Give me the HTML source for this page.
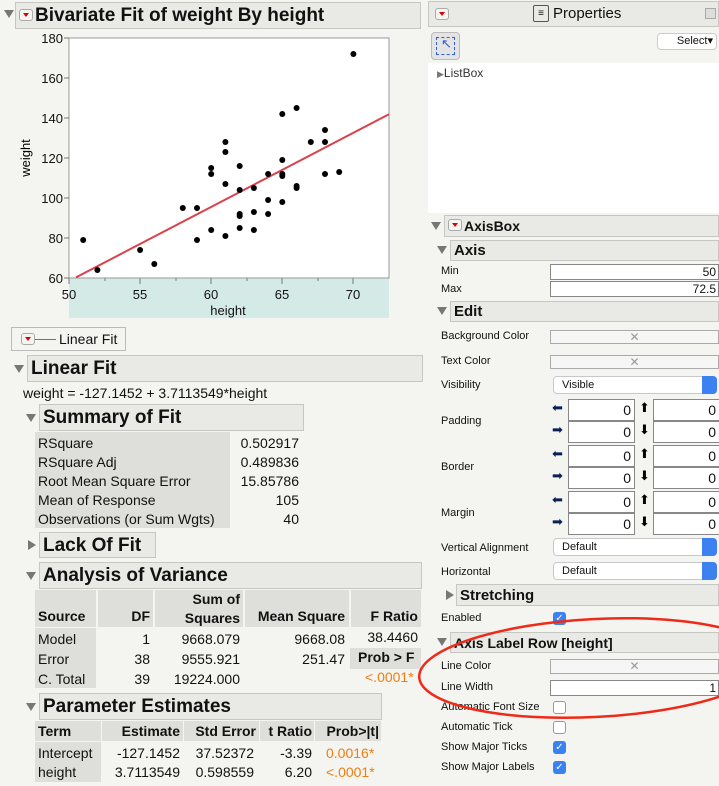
<!DOCTYPE html>
<html><head><meta charset="utf-8"><style>
*{margin:0;padding:0;box-sizing:border-box}
body{width:719px;height:786px;overflow:hidden;background:#f4f4f0;font-family:"Liberation Sans",sans-serif;color:#111;position:relative}
.a{position:absolute;white-space:nowrap}
.hb{position:absolute;background:#e9e9e5;border:1px solid #c6c6c2;font-weight:bold}
.tri{position:absolute;width:0;height:0;border-left:5px solid transparent;border-right:5px solid transparent;border-top:8px solid #777}
.trr{position:absolute;width:0;height:0;border-top:5px solid transparent;border-bottom:5px solid transparent;border-left:8px solid #777}
.rb{position:absolute;width:14px;height:12px;border:1px solid #aaa;border-radius:3px;background:#f4f4f0}
.rb:after{content:"";position:absolute;left:3px;top:3px;border-left:3px solid transparent;border-right:3px solid transparent;border-top:4px solid #d00}
.g{position:absolute;background:#dededa}
.t14{font-size:14px}
.r{text-align:right}
.lb{position:absolute;font-size:11px;left:441px}
.in{position:absolute;background:#fff;border:1px solid #888;font-size:12px;text-align:right;padding-right:2px;line-height:14px}
.cb{position:absolute;border:1px solid #aaa;background:#f6f6f6;text-align:center;color:#999;font-size:12px;line-height:13px}
.sel{position:absolute;background:#fff;border:1px solid #c8c8c8;border-radius:4px;font-size:11px;padding-left:8px;line-height:16px}
.sel:after{content:"";position:absolute;right:-1px;top:-1px;width:15px;height:18px;background:#3b82f0;border-radius:0 4px 4px 0}
.ck{position:absolute;width:13px;height:13px;border-radius:3px;background:#3b82f0;color:#fff;font-size:10px;line-height:13px;text-align:center}
.uc{position:absolute;width:13px;height:13px;border-radius:3px;background:#fff;border:1px solid #999}
.nb{position:absolute;background:#fff;border:1px solid #888;font-size:14px;text-align:right;padding-right:3px;line-height:20px}
.ar{position:absolute;font-size:13px;color:#0a1f55}
</style></head><body>

<!-- LEFT -->
<div class="tri" style="left:4px;top:10px"></div>
<div class="hb" style="left:15px;top:2px;width:406px;height:27px;font-size:19px;padding-left:19px;line-height:26px">Bivariate Fit of weight By height</div>
<div class="rb" style="left:19px;top:9px"></div>

<svg class="a" style="left:0;top:0" width="420" height="325">
<rect x="69" y="278" width="320" height="40" fill="#d4eae7"/>
<rect x="69" y="38" width="320" height="240" fill="#fff" stroke="#999" stroke-width="1"/>
<g stroke="#777" stroke-width="1">
<line x1="64" y1="38" x2="69" y2="38"/><line x1="64" y1="78" x2="69" y2="78"/><line x1="64" y1="118" x2="69" y2="118"/><line x1="64" y1="158" x2="69" y2="158"/><line x1="64" y1="198" x2="69" y2="198"/><line x1="64" y1="238" x2="69" y2="238"/><line x1="64" y1="278" x2="69" y2="278"/>
<line x1="69" y1="278" x2="69" y2="284"/><line x1="140" y1="278" x2="140" y2="284"/><line x1="211" y1="278" x2="211" y2="284"/><line x1="282" y1="278" x2="282" y2="284"/><line x1="353" y1="278" x2="353" y2="284"/>
<line x1="105" y1="278" x2="105" y2="281"/><line x1="176" y1="278" x2="176" y2="281"/><line x1="247" y1="278" x2="247" y2="281"/><line x1="318" y1="278" x2="318" y2="281"/>
</g>
<g font-size="13" fill="#111" text-anchor="end">
<text x="63" y="43">180</text><text x="63" y="83">160</text><text x="63" y="123">140</text><text x="63" y="163">120</text><text x="63" y="203">100</text><text x="63" y="243">80</text><text x="63" y="283">60</text></g>
<g font-size="13" fill="#111" text-anchor="middle">
<text x="69" y="299">50</text><text x="140" y="299">55</text><text x="211" y="299">60</text><text x="282" y="299">65</text><text x="353" y="299">70</text>
<text x="228" y="315">height</text></g>
<text x="30" y="158" font-size="13" text-anchor="middle" transform="rotate(-90 30 158)">weight</text>
<line x1="76" y1="277.4" x2="389" y2="114.2" stroke="#d9424c" stroke-width="2"/>
<g fill="#000">
<circle cx="83.2" cy="240" r="3"/><circle cx="97.4" cy="270" r="3"/><circle cx="140.1" cy="250" r="3"/><circle cx="154.3" cy="264" r="3"/><circle cx="182.8" cy="208" r="3"/><circle cx="197" cy="208" r="3"/><circle cx="197" cy="240" r="3"/>
<circle cx="211.2" cy="168" r="3"/><circle cx="211.2" cy="174" r="3"/><circle cx="211.2" cy="230" r="3"/>
<circle cx="225.4" cy="142" r="3"/><circle cx="225.4" cy="152" r="3"/><circle cx="225.4" cy="184" r="3"/><circle cx="225.4" cy="236" r="3"/>
<circle cx="239.7" cy="166" r="3"/><circle cx="239.7" cy="190" r="3"/><circle cx="239.7" cy="214" r="3"/><circle cx="239.7" cy="216" r="3"/><circle cx="239.7" cy="228" r="3"/>
<circle cx="253.9" cy="188" r="3"/><circle cx="253.9" cy="212" r="3"/><circle cx="253.9" cy="230" r="3"/>
<circle cx="268.1" cy="174" r="3"/><circle cx="268.1" cy="200" r="3"/><circle cx="268.1" cy="214" r="3"/>
<circle cx="282.3" cy="114" r="3"/><circle cx="282.3" cy="160" r="3"/><circle cx="282.3" cy="174" r="3"/><circle cx="282.3" cy="176" r="3"/><circle cx="282.3" cy="202" r="3"/>
<circle cx="296.6" cy="108" r="3"/><circle cx="296.6" cy="186" r="3"/><circle cx="296.6" cy="188" r="3"/>
<circle cx="310.8" cy="142" r="3"/><circle cx="325" cy="130" r="3"/><circle cx="325" cy="142" r="3"/><circle cx="325" cy="174" r="3"/><circle cx="339.2" cy="172" r="3"/><circle cx="353.4" cy="54" r="3"/>
</g></svg>

<div class="a" style="left:11px;top:327px;width:115px;height:24px;border:1px solid #bbb"></div>
<div class="rb" style="left:21px;top:333px"></div>
<div class="a" style="left:35px;top:339px;width:21px;height:1px;background:#d9424c"></div>
<div class="a t14" style="left:59px;top:331px">Linear Fit</div>

<div class="tri" style="left:14px;top:365px"></div>
<div class="hb" style="left:27px;top:355px;width:396px;height:27px;font-size:19px;padding-left:3px;line-height:26px">Linear Fit</div>
<div class="a t14" style="left:23px;top:385px">weight = -127.1452 + 3.7113549*height</div>

<div class="tri" style="left:26px;top:414px"></div>
<div class="hb" style="left:39px;top:404px;width:265px;height:27px;font-size:19px;padding-left:3px;line-height:26px">Summary of Fit</div>
<div class="g" style="left:35px;top:432px;width:195px;height:96px"></div>
<div class="a t14" style="left:38px;top:434px;line-height:19px">RSquare<br>RSquare Adj<br>Root Mean Square Error<br>Mean of Response<br>Observations (or Sum Wgts)</div>
<div class="a t14 r" style="left:200px;width:99px;top:434px;line-height:19px">0.502917<br>0.489836<br>15.85786<br>105<br>40</div>

<div class="trr" style="left:28px;top:540px"></div>
<div class="hb" style="left:39px;top:532px;width:117px;height:26px;font-size:19px;padding-left:3px;line-height:25px">Lack Of Fit</div>

<div class="tri" style="left:26px;top:572px"></div>
<div class="hb" style="left:39px;top:562px;width:383px;height:27px;font-size:19px;padding-left:3px;line-height:26px">Analysis of Variance</div>
<div class="g" style="left:35px;top:590px;width:61px;height:37px"></div>
<div class="g" style="left:98px;top:590px;width:55px;height:37px"></div>
<div class="g" style="left:155px;top:590px;width:88px;height:37px"></div>
<div class="g" style="left:245px;top:590px;width:104px;height:37px"></div>
<div class="g" style="left:351px;top:590px;width:70px;height:37px"></div>
<div class="g" style="left:35px;top:628px;width:61px;height:60px"></div>
<div class="g" style="left:350px;top:648px;width:71px;height:21px"></div>
<div class="a t14" style="left:38px;top:608px;font-weight:bold">Source</div>
<div class="a t14 r" style="left:98px;width:52px;top:608px;font-weight:bold">DF</div>
<div class="a t14 r" style="left:155px;width:85px;top:590px;font-weight:bold;line-height:19px">Sum of<br>Squares</div>
<div class="a t14 r" style="left:245px;width:100px;top:608px;font-weight:bold">Mean Square</div>
<div class="a t14 r" style="left:351px;width:67px;top:608px;font-weight:bold">F Ratio</div>
<div class="a t14" style="left:38px;top:629px;line-height:20px">Model<br>Error<br>C. Total</div>
<div class="a t14 r" style="left:98px;width:52px;top:629px;line-height:20px">1<br>38<br>39</div>
<div class="a t14 r" style="left:155px;width:85px;top:629px;line-height:20px">9668.079<br>9555.921<br>19224.000</div>
<div class="a t14 r" style="left:245px;width:100px;top:629px;line-height:20px">9668.08<br>251.47</div>
<div class="a t14 r" style="left:351px;width:67px;top:629px">38.4460</div>
<div class="a t14" style="left:358px;top:649px;font-weight:bold">Prob &gt; F</div>
<div class="a t14" style="left:365px;top:669px;color:#f07d12">&lt;.0001*</div>

<div class="tri" style="left:26px;top:703px"></div>
<div class="hb" style="left:39px;top:693px;width:343px;height:27px;font-size:19px;padding-left:3px;line-height:26px">Parameter Estimates</div>
<div class="g" style="left:35px;top:721px;width:66px;height:20px"></div>
<div class="g" style="left:102px;top:721px;width:81px;height:20px"></div>
<div class="g" style="left:184px;top:721px;width:75px;height:20px"></div>
<div class="g" style="left:260px;top:721px;width:54px;height:20px"></div>
<div class="g" style="left:315px;top:721px;width:66px;height:20px"></div>
<div class="g" style="left:35px;top:742px;width:66px;height:40px"></div>
<div class="a t14" style="left:38px;top:723px;font-weight:bold">Term</div>
<div class="a t14 r" style="left:102px;width:78px;top:723px;font-weight:bold">Estimate</div>
<div class="a t14 r" style="left:184px;width:72px;top:723px;font-weight:bold">Std Error</div>
<div class="a t14 r" style="left:260px;width:52px;top:723px;font-weight:bold">t Ratio</div>
<div class="a t14 r" style="left:315px;width:64px;top:723px;font-weight:bold">Prob&gt;|t|</div>
<div class="a t14" style="left:38px;top:744px;line-height:19px">Intercept<br>height</div>
<div class="a t14 r" style="left:102px;width:78px;top:744px;line-height:19px">-127.1452<br>3.7113549</div>
<div class="a t14 r" style="left:184px;width:70px;top:744px;line-height:19px">37.52372<br>0.598559</div>
<div class="a t14 r" style="left:260px;width:52px;top:744px;line-height:19px">-3.39<br>6.20</div>
<div class="a t14" style="left:326px;top:744px;line-height:19px;color:#f07d12">0.0016*<br>&lt;.0001*</div>

<!-- RIGHT -->
<div class="a" style="left:428px;top:1px;width:291px;height:26px;background:#e9e9e5;border:1px solid #c6c6c2"></div>
<div class="rb" style="left:435px;top:8px"></div>
<div class="a" style="left:533px;top:5px;width:16px;height:17px;border:1px solid #555;border-radius:2px;font-size:10px;text-align:center;line-height:15px">≡</div>
<div class="a" style="left:553px;top:5px;font-size:15px">Properties</div>
<div class="a" style="left:705px;top:8px;width:11px;height:11px;border:1px solid #aaa;background:#ddd"></div>
<div class="a" style="left:431px;top:32px;width:29px;height:28px;border:1px solid #bbb;border-radius:4px;background:#e4e4e4"></div>
<div class="a" style="left:436px;top:37px;width:19px;height:18px;border:1px dashed #3060d0"></div>
<div class="a" style="left:441px;top:36px;font-size:13px;color:#3060d0">↖</div>
<div class="a" style="left:657px;top:33px;width:60px;height:17px;background:#fff;border:1px solid #ccc;border-radius:4px;font-size:11px;line-height:15px;text-align:right;padding-right:3px">Select▾</div>
<div class="a" style="left:428px;top:63px;width:291px;height:150px;background:#fff"></div>
<div class="a" style="left:437px;top:66px;font-size:12px;color:#333"><span style="color:#777;font-size:9px">▶</span>ListBox</div>

<div class="tri" style="left:431px;top:222px"></div>
<div class="hb" style="left:444px;top:215px;width:275px;height:22px;font-size:14px;padding-left:19px;line-height:21px">AxisBox</div>
<div class="rb" style="left:448px;top:219px"></div>
<div class="tri" style="left:437px;top:246px"></div>
<div class="hb" style="left:450px;top:240px;width:269px;height:21px;font-size:15px;padding-left:3px;line-height:20px">Axis</div>
<div class="lb" style="top:265px">Min</div><div class="lb" style="top:283px">Max</div>
<div class="in" style="left:550px;top:264px;width:169px;height:16px">50</div>
<div class="in" style="left:550px;top:281px;width:169px;height:16px">72.5</div>
<div class="tri" style="left:437px;top:307px"></div>
<div class="hb" style="left:450px;top:301px;width:269px;height:21px;font-size:15px;padding-left:3px;line-height:20px">Edit</div>
<div class="lb" style="top:330px">Background Color</div>
<div class="cb" style="left:550px;top:330px;width:169px;height:14px">✕</div>
<div class="lb" style="top:355px">Text Color</div>
<div class="cb" style="left:550px;top:355px;width:169px;height:14px">✕</div>
<div class="lb" style="top:379px">Visibility</div>
<div class="sel" style="left:553px;top:376px;width:164px;height:18px">Visible</div>
<div class="lb" style="top:415px">Padding</div>
<div class="lb" style="top:461px">Border</div>
<div class="lb" style="top:507px">Margin</div>

<div class="ar" style="left:552px;top:400px">⬅</div><div class="ar" style="left:552px;top:422px">➡</div>
<div class="ar" style="left:552px;top:446px">⬅</div><div class="ar" style="left:552px;top:468px">➡</div>
<div class="ar" style="left:552px;top:492px">⬅</div><div class="ar" style="left:552px;top:514px">➡</div>
<div class="ar" style="left:639px;top:400px;color:#000">⬆</div><div class="ar" style="left:639px;top:422px;color:#000">⬇</div>
<div class="ar" style="left:639px;top:446px;color:#000">⬆</div><div class="ar" style="left:639px;top:468px;color:#000">⬇</div>
<div class="ar" style="left:639px;top:492px;color:#000">⬆</div><div class="ar" style="left:639px;top:514px;color:#000">⬇</div>
<div class="nb" style="left:568px;top:399px;width:67px;height:22px">0</div><div class="nb" style="left:653px;top:399px;width:67px;height:22px">0</div>
<div class="nb" style="left:568px;top:421px;width:67px;height:22px">0</div><div class="nb" style="left:653px;top:421px;width:67px;height:22px">0</div>
<div class="nb" style="left:568px;top:445px;width:67px;height:22px">0</div><div class="nb" style="left:653px;top:445px;width:67px;height:22px">0</div>
<div class="nb" style="left:568px;top:467px;width:67px;height:22px">0</div><div class="nb" style="left:653px;top:467px;width:67px;height:22px">0</div>
<div class="nb" style="left:568px;top:491px;width:67px;height:22px">0</div><div class="nb" style="left:653px;top:491px;width:67px;height:22px">0</div>
<div class="nb" style="left:568px;top:513px;width:67px;height:22px">0</div><div class="nb" style="left:653px;top:513px;width:67px;height:22px">0</div>

<div class="lb" style="top:542px">Vertical Alignment</div>
<div class="sel" style="left:553px;top:538px;width:164px;height:18px">Default</div>
<div class="lb" style="top:566px">Horizontal</div>
<div class="sel" style="left:553px;top:562px;width:164px;height:18px">Default</div>
<div class="trr" style="left:446px;top:590px"></div>
<div class="hb" style="left:456px;top:584px;width:263px;height:22px;font-size:15px;padding-left:3px;line-height:21px">Stretching</div>
<div class="lb" style="top:612px">Enabled</div>
<div class="ck" style="left:553px;top:612px">✓</div>
<div class="tri" style="left:437px;top:638px"></div>
<div class="hb" style="left:450px;top:632px;width:269px;height:21px;font-size:14px;padding-left:3px;line-height:20px">Axis Label Row [height]</div>
<div class="lb" style="top:660px">Line Color</div>
<div class="cb" style="left:550px;top:659px;width:169px;height:15px">✕</div>
<div class="lb" style="top:681px">Line Width</div>
<div class="in" style="left:550px;top:680px;width:169px;height:16px">1</div>
<div class="lb" style="top:701px">Automatic Font Size</div>
<div class="uc" style="left:553px;top:701px"></div>
<div class="lb" style="top:721px">Automatic Tick</div>
<div class="uc" style="left:553px;top:721px"></div>
<div class="lb" style="top:741px">Show Major Ticks</div>
<div class="ck" style="left:553px;top:741px">✓</div>
<div class="lb" style="top:761px">Show Major Labels</div>
<div class="ck" style="left:553px;top:761px">✓</div>

<svg class="a" style="left:0;top:0" width="719" height="786">
<ellipse cx="595" cy="668" rx="176" ry="49" transform="rotate(-3 595 668)" fill="none" stroke="#ee2a18" stroke-width="2.5"/>
</svg>
</body></html>
